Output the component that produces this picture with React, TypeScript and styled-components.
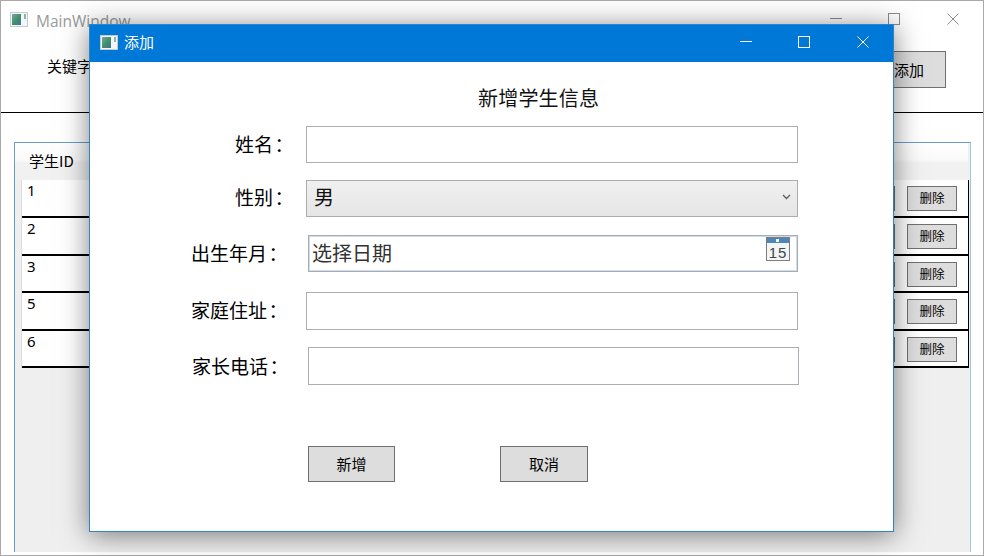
import React from "react";
import styled, { createGlobalStyle } from "styled-components";

const Global = createGlobalStyle`
  html, body { margin: 0; padding: 0; background: #fff; }
  body { width: 984px; height: 556px; overflow: hidden; font-family: "Noto Sans CJK SC", "Noto Sans", sans-serif; }
  * { box-sizing: border-box; }
`;

const Desktop = styled.div`
  position: relative;
  width: 984px;
  height: 556px;
  overflow: hidden;
`;

const MainWindow = styled.div`
  width: 984px;
  height: 556px;
  border: 1px solid #a9a9a9;
  background: #fff;
  display: flex;
  flex-direction: column;
`;

const TitleBar = styled.div<{ $active?: boolean }>`
  flex: none;
  height: ${(p) => (p.$active ? "37px" : "39px")};
  display: flex;
  align-items: center;
  padding-left: ${(p) => (p.$active ? "10px" : "9px")};
  background: ${(p) => (p.$active ? "#0078d7" : "#fff")};
  color: ${(p) => (p.$active ? "#fff" : "#9a9a9a")};
  font-size: ${(p) => (p.$active ? "15px" : "15.5px")};
  font-family: ${(p) => (p.$active ? '"Noto Sans CJK SC"' : '"Open Sans"')}, sans-serif;
`;

const TitleText = styled.span<{ $lift?: number; $gap: number }>`
  margin-left: ${(p) => p.$gap}px;
  margin-bottom: ${(p) => p.$lift ?? 0}px;
  line-height: 20px;
`;

const AppIconSvg = styled.svg`
  flex: none;
  margin-bottom: 2px;
`;

const WindowControls = styled.div<{ $active?: boolean }>`
  margin-left: auto;
  margin-bottom: ${(p) => (p.$active ? "3px" : "4px")};
  display: flex;
  align-items: center;
  gap: 47px;
  padding-right: 24px;
  color: ${(p) => (p.$active ? "#fff" : "#8c8c8c")};
`;

const MinimizeGlyph = styled.svg`
  margin-right: -1px;
`;

const Toolbar = styled.div`
  flex: none;
  height: 73px;
  border-bottom: 1px solid #000;
  display: flex;
  align-items: flex-start;
  justify-content: space-between;
  padding: 11px 37px 0 46px;
`;

const Keyword = styled.span`
  font-size: 15px;
  line-height: 30px;
  color: #000;
`;

const Button = styled.button<{ $w: number; $h: number; $size: number }>`
  width: ${(p) => p.$w}px;
  height: ${(p) => p.$h}px;
  flex: none;
  padding: 0;
  border: 1px solid #707070;
  background: #dddddd;
  color: #000;
  font-family: "Noto Sans CJK SC", sans-serif;
  font-size: ${(p) => p.$size}px;
  line-height: 1;
`;

const ToolbarButton = styled(Button)`
  display: flex;
  align-items: center;
  justify-content: flex-end;
  padding-right: 21px;
`;

const DialogButton = styled(Button)`
  padding-bottom: 2px;
`;

const GridArea = styled.div`
  flex: 1;
  padding: 29px 12px 3px 13px;
  display: flex;
`;

const Grid = styled.div`
  flex: 1;
  border: 1px solid #a5c3e0;
  border-left-color: #6a9bcb;
  border-top-color: #6a9bcb;
  border-bottom: none;
  background: #efefef;
`;

const GridHeader = styled.div`
  height: 37px;
  padding: 0 0 2px 14px;
  display: flex;
  align-items: center;
  background: linear-gradient(#ffffff 0, #fafafa 45%, #f1f1f1 55%, #f1f1f1 100%);
  font-family: "Noto Sans CJK SC", sans-serif;
  font-size: 15px;
  color: #000;
  width: 953px;
`;

const Rows = styled.div`
  margin-left: 6px;
  width: 948px;
  border-left: 1px solid #dcdcdc;
`;

const GridRow = styled.div<{ $h: number }>`
  height: ${(p) => p.$h}px;
  border-bottom: 2px solid #000;
  border-right: 1.5px solid #000;
  background: #fff;
  display: flex;
  align-items: flex-start;
  padding: 5px 11px 0 5px;
  font-family: "Noto Sans", sans-serif;
  font-size: 15px;
  line-height: 14px;
  color: #000;
`;

const RowId = styled.span`
  margin-top: -2px;
  margin-right: auto;
`;

const RowButtons = styled.div`
  display: flex;
  gap: 12px;
  margin-top: 1px;
`;

const Dialog = styled.div`
  position: absolute;
  left: 89px;
  top: 24px;
  width: 805px;
  height: 508px;
  border: 1px solid #2f83c9;
  background: #fff;
  box-shadow: 0 3px 26px rgba(0, 0, 0, 0.5);
  display: flex;
  flex-direction: column;
`;

const Heading = styled.div`
  margin: 24px 0 0 388px;
  font-size: 20px;
  letter-spacing: 0.2px;
  line-height: 24px;
  color: #111;
`;

const Form = styled.div`
  display: flex;
  flex-direction: column;
`;

const FormRow = styled.div<{ $top: number; $fieldLeft: number; $fieldW: number; $h?: number }>`
  margin-top: ${(p) => p.$top}px;
  height: ${(p) => p.$h ?? 37}px;
  display: grid;
  grid-template-columns: ${(p) => p.$fieldLeft}px ${(p) => p.$fieldW}px;
  align-items: stretch;
`;

const Label = styled.label<{ $left: number; $lift: number }>`
  display: flex;
  align-items: center;
  padding-left: ${(p) => p.$left}px;
  padding-bottom: ${(p) => p.$lift * 2}px;
  white-space: nowrap;
  font-size: 19px;
  color: #000;
`;

const Colon = styled.span`
  margin-left: 1.5px;
`;

const Input = styled.div`
  border: 1px solid #abadb3;
  background: #fff;
`;

const Select = styled.div`
  border: 1px solid #acacac;
  background: linear-gradient(#f0f0f0, #e5e5e5);
  display: flex;
  align-items: center;
  justify-content: space-between;
  padding: 0 6px 4px 7px;
  font-size: 20px;
  color: #111;
`;

const DatePicker = styled.div`
  border: 1px solid #a3aeb9;
  box-shadow: inset 0 0 0 1px #d2dbe5;
  background: #fff;
  display: flex;
  align-items: center;
  justify-content: space-between;
  padding: 0 7px 2px 3px;
  font-size: 20px;
  color: #333;
`;

const CalendarSvg = styled.svg`
  margin-bottom: 7px;
`;

const DialogActions = styled.div`
  margin: 61px 0 0 218px;
  display: flex;
  gap: 105px;
`;

const AppIcon = ({ id }: { id: string }) => (
  <AppIconSvg width="18" height="15" viewBox="0 0 18 15">
    <defs>
      <linearGradient id={id} x1="0" y1="0" x2="1" y2="1">
        <stop offset="0" stopColor="#7aa3a8" />
        <stop offset="0.55" stopColor="#3f8f68" />
        <stop offset="1" stopColor="#3f72a0" />
      </linearGradient>
    </defs>
    <rect x="0.5" y="0.5" width="17" height="14" fill="#f4f6f6" stroke="#c4cbd0" />
    <rect x="2" y="2" width="9" height="11" fill={`url(#${id})`} />
    <rect x="14" y="2" width="2" height="5" fill="#8fb3b3" />
  </AppIconSvg>
);

const Controls = ({ active }: { active?: boolean }) => (
  <WindowControls $active={active}>
    <MinimizeGlyph width="12" height="12" viewBox="0 0 12 12"><path d="M0 5.5H12" stroke="currentColor" fill="none" /></MinimizeGlyph>
    <svg width="12" height="12" viewBox="0 0 12 12"><rect x="0.5" y="0.5" width="11" height="11" stroke="currentColor" fill="none" /></svg>
    <svg width="12" height="12" viewBox="0 0 12 12"><path d="M0.5 0.5L11.5 11.5M11.5 0.5L0.5 11.5" stroke="currentColor" fill="none" /></svg>
  </WindowControls>
);

const Chevron = () => (
  <svg width="9" height="6" viewBox="0 0 9 6"><path d="M1 1L4.5 4.5L8 1" stroke="#606060" strokeWidth="1.4" fill="none" /></svg>
);

const CalendarIcon = () => (
  <CalendarSvg width="24" height="24" viewBox="0 0 24 24">
    <rect x="0.5" y="0.5" width="23" height="23" fill="#f4f4f4" stroke="#7d7d7d" />
    <rect x="1" y="1" width="22" height="5" fill="#4f86b8" />
    <rect x="10" y="2" width="3" height="3" fill="#fff" />
    <text x="12" y="20.5" textAnchor="middle" fontSize="15" letterSpacing="0.8" fontFamily="Liberation Sans, sans-serif" fill="#3c4650">15</text>
  </CalendarSvg>
);

const rows = [
  { id: "1", h: 38 },
  { id: "2", h: 38 },
  { id: "3", h: 37 },
  { id: "5", h: 38 },
  { id: "6", h: 37 },
];

export default function App() {
  return (
    <Desktop>
      <Global />
      <MainWindow>
        <TitleBar>
          <AppIcon id="main-icon" />
          <TitleText $gap={8}>MainWindow</TitleText>
          <Controls />
        </TitleBar>
        <Toolbar>
          <Keyword>关键字</Keyword>
          <ToolbarButton $w={87} $h={37} $size={15}>添加</ToolbarButton>
        </Toolbar>
        <GridArea>
          <Grid>
            <GridHeader>学生ID</GridHeader>
            <Rows>
              {rows.map((r) => (
                <GridRow key={r.id} $h={r.h}>
                  <RowId>{r.id}</RowId>
                  <RowButtons>
                    <Button $w={50} $h={25} $size={12.5}>修改</Button>
                    <Button $w={50} $h={25} $size={12.5}>删除</Button>
                  </RowButtons>
                </GridRow>
              ))}
            </Rows>
          </Grid>
        </GridArea>
      </MainWindow>

      <Dialog>
        <TitleBar $active>
          <AppIcon id="dialog-icon" />
          <TitleText $gap={6} $lift={3}>添加</TitleText>
          <Controls active />
        </TitleBar>
        <Heading>新增学生信息</Heading>
        <Form>
          <FormRow $top={16} $fieldLeft={216} $fieldW={492}>
            <Label $left={145} $lift={1}>姓名<Colon>：</Colon></Label>
            <Input />
          </FormRow>
          <FormRow $top={17} $fieldLeft={216} $fieldW={492}>
            <Label $left={145} $lift={2}>性别<Colon>：</Colon></Label>
            <Select>男<Chevron /></Select>
          </FormRow>
          <FormRow $top={18} $fieldLeft={218} $fieldW={490}>
            <Label $left={101} $lift={1}>出生年月<Colon>：</Colon></Label>
            <DatePicker>选择日期<CalendarIcon /></DatePicker>
          </FormRow>
          <FormRow $top={20} $fieldLeft={216} $fieldW={492} $h={38}>
            <Label $left={101} $lift={2}>家庭住址<Colon>：</Colon></Label>
            <Input />
          </FormRow>
          <FormRow $top={17} $fieldLeft={218} $fieldW={491} $h={38}>
            <Label $left={102} $lift={1}>家长电话<Colon>：</Colon></Label>
            <Input />
          </FormRow>
        </Form>
        <DialogActions>
          <DialogButton $w={87} $h={36} $size={15}>新增</DialogButton>
          <DialogButton $w={88} $h={36} $size={15}>取消</DialogButton>
        </DialogActions>
      </Dialog>
    </Desktop>
  );
}
